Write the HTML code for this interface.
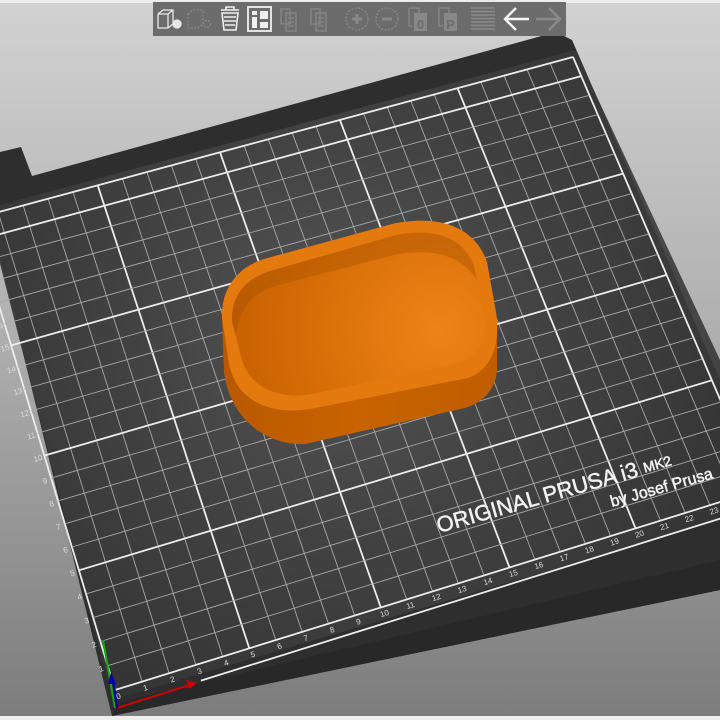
<!DOCTYPE html>
<html><head><meta charset="utf-8"><style>
html,body{margin:0;padding:0;width:720px;height:720px;overflow:hidden;background:#999}
svg{display:block}
text{font-family:"Liberation Sans",sans-serif}
</style></head><body>
<svg id="s" width="720" height="720" viewBox="0 0 720 720" xmlns="http://www.w3.org/2000/svg">
<defs>
<linearGradient id="bg" x1="0" y1="0" x2="0" y2="1">
<stop offset="0" stop-color="#d2d2d2"/><stop offset="0.45" stop-color="#b0b0b0"/><stop offset="1" stop-color="#7c7c7c"/></linearGradient>
<radialGradient id="face" cx="340" cy="330" r="420" gradientUnits="userSpaceOnUse">
<stop offset="0" stop-color="#585858"/><stop offset="0.5" stop-color="#444"/><stop offset="1" stop-color="#353535"/></radialGradient>
<linearGradient id="side" x1="0" y1="0" x2="1" y2="0">
<stop offset="0" stop-color="#b85800"/><stop offset="0.5" stop-color="#c96300"/><stop offset="1" stop-color="#c05d00"/></linearGradient>
<radialGradient id="cav" cx="440" cy="330" r="240" gradientUnits="userSpaceOnUse">
<stop offset="0" stop-color="#ee8318"/><stop offset="0.55" stop-color="#d66d06"/><stop offset="1" stop-color="#c05c00"/></radialGradient>
</defs>
<rect width="720" height="720" fill="url(#bg)"/>
<rect width="720" height="3" fill="#ececec"/>
<rect y="716" width="720" height="4" fill="#eeeeee"/>
<polygon points="0,152 21,147 32,176 556,32 572,40 720,380 720,590 112,716 0,259" fill="#2e2e2e"/>
<polygon points="112,716 120,702 720,560 720,590" fill="#282828"/>
<polygon points="0,205 575,50 720,360 720,520 112,700 0,264" fill="url(#face)" opacity="0.9"/>
<g id="grid"></g>
<g id="labels" fill="#dcdcdc" font-size="8"></g>
<line x1="117" y1="708" x2="190" y2="685" stroke="#c00" stroke-width="2"/>
<polygon points="197,683 186,680 189,689" fill="#c00"/>
<line x1="115" y1="708" x2="103" y2="640" stroke="#1a1" stroke-width="2"/>
<line x1="117" y1="708" x2="113" y2="680" stroke="#00a" stroke-width="2.5"/>
<polygon points="111,672 108,684 116,684" fill="#00a"/>
<g fill="#f2f2f2" stroke="#f2f2f2" stroke-width="0.5">
<text transform="translate(439,533) rotate(-15.8)" font-size="22">ORIGINAL PRUSA i3 <tspan font-size="14" dy="-2">MK2</tspan></text>
<text transform="translate(612,507) rotate(-15.8)" font-size="16">by Josef Prusa</text>
</g>
<path d="M222,318 L224,372 C230,420 268,446 305,444 L465,408 C487,401 497,385 497,368 L497,318 Z" fill="url(#side)"/>
<path d="M222,318 C221,290 236,268 264,259 L392,224 C444,213 476,230 487,262 L496,312 C501,345 491,370 468,378 L310,409 C266,416 236,398 229,364 Z" fill="#e47a0e"/>
<path d="M232,322 C231,296 245,279 270,271 L396,235 C440,227 464,240 474,266 L484,314 C488,338 478,356 460,363 L312,394 C276,400 250,386 242,360 Z" fill="url(#cav)"/>
<path d="M232,322 C231,296 245,279 270,271 L396,235 C440,227 464,240 474,266 L477,280 C462,258 440,248 398,254 L275,286 C252,294 240,306 236,335 Z" fill="#a04c00" opacity="0.35"/>
<rect x="153" y="2" width="413" height="34" fill="#6c6c6c"/>
<g fill="none" stroke-width="1.3">
 <g stroke="#e8e8e8"><path d="M158,14 l5,-4 h10 v14 l-5,4 h-10 z M158,14 h10 v14 M168,14 l5,-4"/><circle cx="177" cy="24" r="4" fill="#e8e8e8"/></g>
 <g stroke="#888" stroke-dasharray="2 1.5"><path d="M188,14 l5,-4 h10 v14 l-5,4 h-10 z"/><circle cx="207" cy="24" r="3.5"/></g>
 <g stroke="#f0f0f0" stroke-width="1.6"><path d="M221,10 h18 M226,10 v-3 h8 v3 M222,13 l2,17 h12 l2,-17 z M224,17 h12 M224,21 h12 M225,25 h10"/></g>
 <rect x="248" y="7" width="23" height="24" stroke="#f0f0f0" stroke-width="1.8"/>
 <rect x="252" y="11" width="5" height="4" fill="#f0f0f0" stroke="none"/><rect x="252" y="17" width="5" height="11" fill="#f0f0f0" stroke="none"/><rect x="260" y="11" width="8" height="8" fill="#f0f0f0" stroke="none"/><rect x="260" y="22" width="8" height="6" fill="#f0f0f0" stroke="none"/>
 <g stroke="#888"><path d="M281,9 h9 v15 h-9 z M286,13 h10 v18 h-10 z M288,18 h6 M288,22 h6 M288,26 h6"/><path d="M311,9 h9 v15 h-9 z M316,13 h10 v18 h-10 z M318,18 h6 M318,22 h6 M318,26 h6"/></g>
 <g stroke="#888" stroke-dasharray="2 1.5"><circle cx="357" cy="19" r="11"/><circle cx="387" cy="19" r="11"/></g>
 <path d="M352,19 h10 M357,14 v10 M382,19 h10" stroke="#888" stroke-width="3"/>
 <g stroke="#888"><path d="M409,8 h10 v5 M409,8 v18 h4"/><path d="M439,8 h10 v5 M439,8 v18 h4"/></g>
 <rect x="414" y="13" width="13" height="18" fill="#888" stroke="none"/><rect x="444" y="13" width="13" height="18" fill="#888" stroke="none"/>
 <g stroke="#8a8a8a" stroke-width="1.6"><path d="M471,8 h24 M471,11.5 h24 M471,15 h24 M471,18.5 h24 M471,22 h24 M471,25.5 h24 M471,29 h24"/></g>
 <path d="M529,19 h-24 M516,8 l-11,11 l11,11" stroke="#f4f4f4" stroke-width="2.4"/>
 <path d="M536,19 h24 M549,8 l11,11 l-11,11" stroke="#8a8a8a" stroke-width="2.4"/>
</g>
<text x="420.5" y="29" font-size="13" font-weight="bold" fill="#6c6c6c" text-anchor="middle">0</text>
<text x="450.5" y="29" font-size="13" font-weight="bold" fill="#6c6c6c" text-anchor="middle">P</text>
</svg>
<script>
(function(){
var P=[[115,690],[759,490],[573,57],[-27,219]];
var x0=P[0][0],y0=P[0][1],x1=P[1][0],y1=P[1][1],x2=P[2][0],y2=P[2][1],x3=P[3][0],y3=P[3][1];
var dx1=x1-x2,dx2=x3-x2,dx3=x0-x1+x2-x3,dy1=y1-y2,dy2=y3-y2,dy3=y0-y1+y2-y3;
var den=dx1*dy2-dx2*dy1;
var g=(dx3*dy2-dx2*dy3)/den,h=(dx1*dy3-dx3*dy1)/den;
var a=x1-x0+g*x1,b=x3-x0+h*x3,c=x0,d=y1-y0+g*y1,e=y3-y0+h*y3,f=y0;
function m(u,v){u/=25;v/=21;var w=g*u+h*v+1;return [(a*u+b*v+c)/w,(d*u+e*v+f)/w];}
var s='';
function ln(p,q,maj){s+='<line x1="'+p[0].toFixed(1)+'" y1="'+p[1].toFixed(1)+'" x2="'+q[0].toFixed(1)+'" y2="'+q[1].toFixed(1)+'" stroke="'+(maj?'#ececec':'#a8a8a8')+'" stroke-width="'+(maj?1.8:0.9)+'"/>';}
for(var u=0;u<=25;u++){ln(m(u,0),m(u,21),u%5==0||u==25);}
for(var v=0;v<=21;v++){ln(m(0,v),m(25,v),v%5==0||v==21);}
ln(m(3,-0.65),m(25,-0.65),true);
document.getElementById('grid').innerHTML=s;
var t='';
for(var k=0;k<=24;k++){var p=m(k+0.05,-0.38);t+='<text transform="translate('+p[0].toFixed(1)+','+p[1].toFixed(1)+') rotate(-17)" text-anchor="middle">'+k+'</text>';}
for(var k=1;k<=20;k++){var p=m(-0.25,k-0.15);t+='<text transform="translate('+p[0].toFixed(1)+','+p[1].toFixed(1)+') rotate(-17)" text-anchor="middle">'+k+'</text>';}
document.getElementById('labels').innerHTML=t;
})();
</script>
</body></html>
